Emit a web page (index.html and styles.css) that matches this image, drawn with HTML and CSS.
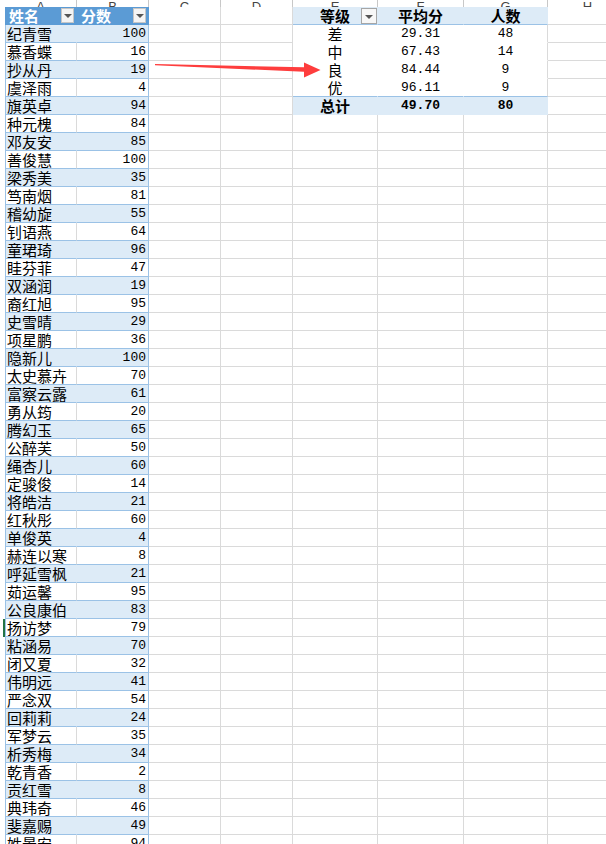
FILE: index.html
```html
<!DOCTYPE html>
<html lang="zh">
<head>
<meta charset="utf-8">
<title>Sheet</title>
<link rel="stylesheet" href="styles.css">
</head>
<body>
<div class="sheet">
  <div class="colhead">
    <div class="ch sp"></div><div class="ch">A</div><div class="ch">B</div><div class="ch">C</div><div class="ch">D</div><div class="ch">E</div><div class="ch">F</div><div class="ch">G</div><div class="ch">H</div>
  </div>
  <div class="row"><i class="sp"></i><div class="c a hdr">姓名<span class="dd"></span></div><div class="c b hdr">分数<span class="dd"></span></div><i class="c"></i><i class="c"></i><div class="c e pv ph">等级<span class="dd pdd"></span></div><div class="c f pv ph fz">平均分</div><div class="c g pv ph fz">人数</div><i class="c"></i></div>
  <div class="row band"><i class="sp"></i><div class="c a">纪青雪</div><div class="c b">100</div><i class="c"></i><i class="c"></i><div class="c e pv pb">差</div><div class="c f pv pb">29.31</div><div class="c g pv pb">48</div><i class="c"></i></div>
  <div class="row"><i class="sp"></i><div class="c a">慕香蝶</div><div class="c b">16</div><i class="c"></i><i class="c"></i><div class="c e pv pb">中</div><div class="c f pv pb">67.43</div><div class="c g pv pb">14</div><i class="c"></i></div>
  <div class="row band"><i class="sp"></i><div class="c a">抄从丹</div><div class="c b">19</div><i class="c"></i><i class="c"></i><div class="c e pv pb">良</div><div class="c f pv pb">84.44</div><div class="c g pv pb">9</div><i class="c"></i></div>
  <div class="row"><i class="sp"></i><div class="c a">虞泽雨</div><div class="c b">4</div><i class="c"></i><i class="c"></i><div class="c e pv pb last">优</div><div class="c f pv pb last">96.11</div><div class="c g pv pb last">9</div><i class="c"></i></div>
  <div class="row band"><i class="sp"></i><div class="c a">旗英卓</div><div class="c b">94</div><i class="c"></i><i class="c"></i><div class="c e pv pt">总计</div><div class="c f pv pt">49.70</div><div class="c g pv pt">80</div><i class="c"></i></div>
  <div class="row"><i class="sp"></i><div class="c a">种元槐</div><div class="c b">84</div><i class="c"></i><i class="c"></i><i class="c"></i><i class="c"></i><i class="c"></i><i class="c"></i></div>
  <div class="row band"><i class="sp"></i><div class="c a">邓友安</div><div class="c b">85</div><i class="c"></i><i class="c"></i><i class="c"></i><i class="c"></i><i class="c"></i><i class="c"></i></div>
  <div class="row"><i class="sp"></i><div class="c a">善俊慧</div><div class="c b">100</div><i class="c"></i><i class="c"></i><i class="c"></i><i class="c"></i><i class="c"></i><i class="c"></i></div>
  <div class="row band"><i class="sp"></i><div class="c a">梁秀美</div><div class="c b">35</div><i class="c"></i><i class="c"></i><i class="c"></i><i class="c"></i><i class="c"></i><i class="c"></i></div>
  <div class="row"><i class="sp"></i><div class="c a">笃南烟</div><div class="c b">81</div><i class="c"></i><i class="c"></i><i class="c"></i><i class="c"></i><i class="c"></i><i class="c"></i></div>
  <div class="row band"><i class="sp"></i><div class="c a">稽幼旋</div><div class="c b">55</div><i class="c"></i><i class="c"></i><i class="c"></i><i class="c"></i><i class="c"></i><i class="c"></i></div>
  <div class="row"><i class="sp"></i><div class="c a">钊语燕</div><div class="c b">64</div><i class="c"></i><i class="c"></i><i class="c"></i><i class="c"></i><i class="c"></i><i class="c"></i></div>
  <div class="row band"><i class="sp"></i><div class="c a">童珺琦</div><div class="c b">96</div><i class="c"></i><i class="c"></i><i class="c"></i><i class="c"></i><i class="c"></i><i class="c"></i></div>
  <div class="row"><i class="sp"></i><div class="c a">眭芬菲</div><div class="c b">47</div><i class="c"></i><i class="c"></i><i class="c"></i><i class="c"></i><i class="c"></i><i class="c"></i></div>
  <div class="row band"><i class="sp"></i><div class="c a">双涵润</div><div class="c b">19</div><i class="c"></i><i class="c"></i><i class="c"></i><i class="c"></i><i class="c"></i><i class="c"></i></div>
  <div class="row"><i class="sp"></i><div class="c a">裔红旭</div><div class="c b">95</div><i class="c"></i><i class="c"></i><i class="c"></i><i class="c"></i><i class="c"></i><i class="c"></i></div>
  <div class="row band"><i class="sp"></i><div class="c a">史雪晴</div><div class="c b">29</div><i class="c"></i><i class="c"></i><i class="c"></i><i class="c"></i><i class="c"></i><i class="c"></i></div>
  <div class="row"><i class="sp"></i><div class="c a">项星鹏</div><div class="c b">36</div><i class="c"></i><i class="c"></i><i class="c"></i><i class="c"></i><i class="c"></i><i class="c"></i></div>
  <div class="row band"><i class="sp"></i><div class="c a">隐新儿</div><div class="c b">100</div><i class="c"></i><i class="c"></i><i class="c"></i><i class="c"></i><i class="c"></i><i class="c"></i></div>
  <div class="row"><i class="sp"></i><div class="c a">太史慕卉</div><div class="c b">70</div><i class="c"></i><i class="c"></i><i class="c"></i><i class="c"></i><i class="c"></i><i class="c"></i></div>
  <div class="row band"><i class="sp"></i><div class="c a">富察云露</div><div class="c b">61</div><i class="c"></i><i class="c"></i><i class="c"></i><i class="c"></i><i class="c"></i><i class="c"></i></div>
  <div class="row"><i class="sp"></i><div class="c a">勇从筠</div><div class="c b">20</div><i class="c"></i><i class="c"></i><i class="c"></i><i class="c"></i><i class="c"></i><i class="c"></i></div>
  <div class="row band"><i class="sp"></i><div class="c a">腾幻玉</div><div class="c b">65</div><i class="c"></i><i class="c"></i><i class="c"></i><i class="c"></i><i class="c"></i><i class="c"></i></div>
  <div class="row"><i class="sp"></i><div class="c a">公醉芙</div><div class="c b">50</div><i class="c"></i><i class="c"></i><i class="c"></i><i class="c"></i><i class="c"></i><i class="c"></i></div>
  <div class="row band"><i class="sp"></i><div class="c a">绳杏儿</div><div class="c b">60</div><i class="c"></i><i class="c"></i><i class="c"></i><i class="c"></i><i class="c"></i><i class="c"></i></div>
  <div class="row"><i class="sp"></i><div class="c a">定骏俊</div><div class="c b">14</div><i class="c"></i><i class="c"></i><i class="c"></i><i class="c"></i><i class="c"></i><i class="c"></i></div>
  <div class="row band"><i class="sp"></i><div class="c a">将皓洁</div><div class="c b">21</div><i class="c"></i><i class="c"></i><i class="c"></i><i class="c"></i><i class="c"></i><i class="c"></i></div>
  <div class="row"><i class="sp"></i><div class="c a">红秋彤</div><div class="c b">60</div><i class="c"></i><i class="c"></i><i class="c"></i><i class="c"></i><i class="c"></i><i class="c"></i></div>
  <div class="row band"><i class="sp"></i><div class="c a">单俊英</div><div class="c b">4</div><i class="c"></i><i class="c"></i><i class="c"></i><i class="c"></i><i class="c"></i><i class="c"></i></div>
  <div class="row"><i class="sp"></i><div class="c a">赫连以寒</div><div class="c b">8</div><i class="c"></i><i class="c"></i><i class="c"></i><i class="c"></i><i class="c"></i><i class="c"></i></div>
  <div class="row band"><i class="sp"></i><div class="c a">呼延雪枫</div><div class="c b">21</div><i class="c"></i><i class="c"></i><i class="c"></i><i class="c"></i><i class="c"></i><i class="c"></i></div>
  <div class="row"><i class="sp"></i><div class="c a">茹运馨</div><div class="c b">95</div><i class="c"></i><i class="c"></i><i class="c"></i><i class="c"></i><i class="c"></i><i class="c"></i></div>
  <div class="row band"><i class="sp"></i><div class="c a">公良康伯</div><div class="c b">83</div><i class="c"></i><i class="c"></i><i class="c"></i><i class="c"></i><i class="c"></i><i class="c"></i></div>
  <div class="row"><i class="sp sel"></i><div class="c a">扬访梦</div><div class="c b">79</div><i class="c"></i><i class="c"></i><i class="c"></i><i class="c"></i><i class="c"></i><i class="c"></i></div>
  <div class="row band"><i class="sp"></i><div class="c a">粘涵易</div><div class="c b">70</div><i class="c"></i><i class="c"></i><i class="c"></i><i class="c"></i><i class="c"></i><i class="c"></i></div>
  <div class="row"><i class="sp"></i><div class="c a">闭又夏</div><div class="c b">32</div><i class="c"></i><i class="c"></i><i class="c"></i><i class="c"></i><i class="c"></i><i class="c"></i></div>
  <div class="row band"><i class="sp"></i><div class="c a">伟明远</div><div class="c b">41</div><i class="c"></i><i class="c"></i><i class="c"></i><i class="c"></i><i class="c"></i><i class="c"></i></div>
  <div class="row"><i class="sp"></i><div class="c a">严念双</div><div class="c b">54</div><i class="c"></i><i class="c"></i><i class="c"></i><i class="c"></i><i class="c"></i><i class="c"></i></div>
  <div class="row band"><i class="sp"></i><div class="c a">回莉莉</div><div class="c b">24</div><i class="c"></i><i class="c"></i><i class="c"></i><i class="c"></i><i class="c"></i><i class="c"></i></div>
  <div class="row"><i class="sp"></i><div class="c a">军梦云</div><div class="c b">35</div><i class="c"></i><i class="c"></i><i class="c"></i><i class="c"></i><i class="c"></i><i class="c"></i></div>
  <div class="row band"><i class="sp"></i><div class="c a">析秀梅</div><div class="c b">34</div><i class="c"></i><i class="c"></i><i class="c"></i><i class="c"></i><i class="c"></i><i class="c"></i></div>
  <div class="row"><i class="sp"></i><div class="c a">乾青香</div><div class="c b">2</div><i class="c"></i><i class="c"></i><i class="c"></i><i class="c"></i><i class="c"></i><i class="c"></i></div>
  <div class="row band"><i class="sp"></i><div class="c a">贡红雪</div><div class="c b">8</div><i class="c"></i><i class="c"></i><i class="c"></i><i class="c"></i><i class="c"></i><i class="c"></i></div>
  <div class="row"><i class="sp"></i><div class="c a">典玮奇</div><div class="c b">46</div><i class="c"></i><i class="c"></i><i class="c"></i><i class="c"></i><i class="c"></i><i class="c"></i></div>
  <div class="row band"><i class="sp"></i><div class="c a">斐嘉赐</div><div class="c b">49</div><i class="c"></i><i class="c"></i><i class="c"></i><i class="c"></i><i class="c"></i><i class="c"></i></div>
  <div class="row"><i class="sp"></i><div class="c a">姓景安</div><div class="c b">94</div><i class="c"></i><i class="c"></i><i class="c"></i><i class="c"></i><i class="c"></i><i class="c"></i></div>
</div>
<svg class="arrow" width="180" height="30" viewBox="150 58 180 30" aria-hidden="true">
  <polygon points="155,64 304,67.3 304,62.5 320.5,70 304,77.5 304,71.7 155,65.3" fill="#fe3d3d"/>
</svg>
</body>
</html>
```

FILE: styles.css
```css
html, body {
  margin: 0;
  padding: 0;
  background: #ffffff;
}

body {
  width: 606px;
  height: 844px;
  overflow: hidden;
  position: relative;
}

.sheet {
  display: flex;
  flex-direction: column;
}

.colhead,
.row {
  display: grid;
  grid-template-columns: 5px 72px 72px 72px 72px 85px 86px 84px 80px;
}

.colhead {
  height: 7px;
  overflow: hidden;
}

.ch {
  box-sizing: border-box;
  border-right: 1px solid #c8c8c8;
  border-bottom: 1px solid #c4c4c4;
  display: flex;
  align-items: flex-end;
  justify-content: center;
  padding-bottom: 1px;
  font: 13px/13px "Liberation Sans", Arial, sans-serif;
  color: #444444;
}

.ch.sp {
  border-right: none;
}

.row {
  height: 18px;
}

.sp {
  display: block;
  background: #ffffff;
}

.sp.sel {
  box-sizing: border-box;
  border-right: 2px solid #217346;
}

.c {
  display: block;
  box-sizing: border-box;
  border-right: 1px solid #dadada;
  border-bottom: 1px solid #dadada;
  position: relative;
  white-space: nowrap;
  overflow: hidden;
  color: #000000;
  font-style: normal;
}

.a {
  border-left: 1px solid #9bc2e6;
  border-bottom-color: #9bc2e6;
  padding-left: 1px;
  font: 15px/17px "Noto Sans CJK SC", sans-serif;
}

.b {
  border-right-color: #9bc2e6;
  border-bottom-color: #9bc2e6;
  text-align: right;
  padding-right: 2px;
  font: 13px/17px "Liberation Mono", "Courier New", monospace;
}

.band .a,
.band .b {
  background: #ddebf7;
}

.band .a {
  border-right-color: #ddebf7;
}

.hdr {
  background: #5b9bd5;
  color: #ffffff;
  font: bold 15px/17px "Noto Sans CJK SC", sans-serif;
  text-align: left;
  padding-left: 3px;
  border-color: #5b9bd5;
}

.a.hdr {
  border-left-color: #5b9bd5;
}

.b.hdr {
  padding-left: 4px;
}

.dd {
  position: absolute;
  right: 2px;
  top: 1px;
  width: 13px;
  height: 15px;
  box-sizing: border-box;
  border: 1px solid #c6c6c6;
  background: #f4f4f4;
  display: flex;
  align-items: center;
  justify-content: center;
}

.dd::after {
  content: "";
  width: 0;
  height: 0;
  border-left: 4px solid transparent;
  border-right: 4px solid transparent;
  border-top: 4px solid #555555;
  margin-top: 1px;
}

.pdd {
  right: 0;
  width: 16px;
  height: 16px;
  border-color: #a6a6a6;
  background: #f7f7f7;
}

.pv {
  text-align: center;
}

.e {
  font: 15px/17px "Noto Sans CJK SC", sans-serif;
}

.f,
.g {
  font: 13px/17px "Liberation Mono", "Courier New", monospace;
}

.ph {
  background: #ddebf7;
  border-bottom-color: #9bc2e6;
  border-right-color: #ddebf7;
  font-weight: bold;
}

.fz {
  font-family: "Noto Sans CJK SC", sans-serif;
  font-size: 15px;
}

.pb {
  background: #ffffff;
  border-bottom-color: #ffffff;
}

.pb.e,
.pb.f {
  border-right-color: #ffffff;
}

.pb.last {
  border-bottom-color: #9bc2e6;
}

.pt {
  background: #ddebf7;
  border-right-color: #ddebf7;
  border-bottom-color: #ddebf7;
  font-weight: bold;
}

.arrow {
  position: absolute;
  left: 150px;
  top: 58px;
  pointer-events: none;
}
```
